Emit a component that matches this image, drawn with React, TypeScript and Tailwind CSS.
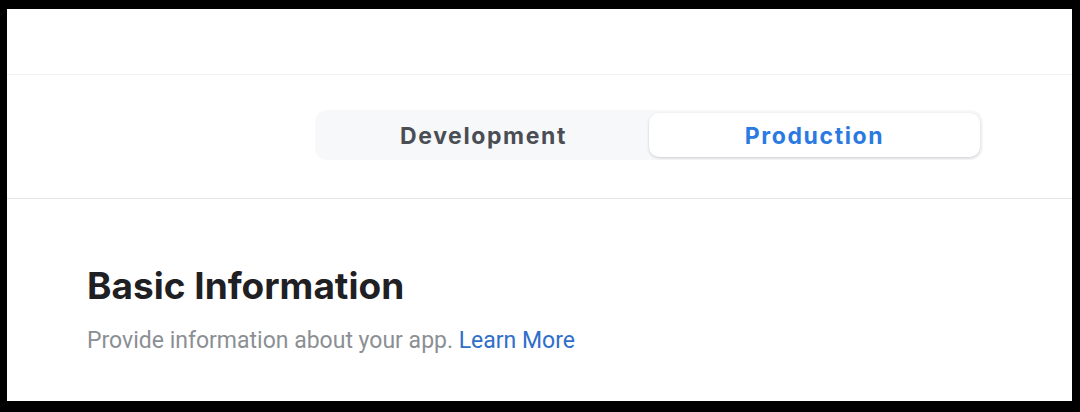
export default function App() {
  return (
    <div className="w-[1080px] h-[412px] bg-black pl-[7px] pt-[9px] pr-[8px] pb-[11px]">
      <div className="w-full h-full bg-white flex flex-col" style={{ fontFamily: "Inter, 'Noto Sans', sans-serif" }}>
        {/* top bar */}
        <div className="h-[66px] border-b border-[#f1f2f4] shrink-0" />

        {/* environment switch */}
        <div className="h-[124px] border-b border-[#e6e7e9] shrink-0 pt-[35px] pl-[308px]">
          <div className="w-[668px] h-[50px] bg-[#f7f8fa] rounded-xl p-[3px] flex">
            <button className="flex-1 flex items-center justify-center pt-[3px] text-[23px] font-bold tracking-[0.07em] text-[#4a4e54]">
              Development
            </button>
            <button className="flex-1 flex items-center justify-center pt-[3px] bg-white rounded-[10px] shadow-[0_1px_3px_rgba(0,0,0,0.18)] text-[23px] font-bold tracking-[0.07em] text-[#2a7ae2]">
              Production
            </button>
          </div>
        </div>

        {/* section header */}
        <div className="pl-[80px] pt-[65px]">
          <h2 className="text-[37px] font-bold text-[#1f2023] leading-[44px]">Basic Information</h2>
          <p className="mt-[18px] text-[23px] text-[#8b8f94] leading-[30px]" style={{ fontFamily: "Roboto, sans-serif" }}>
            Provide information about your app. <a className="text-[#2f6ec9]">Learn More</a>
          </p>
        </div>
      </div>
    </div>
  );
}
